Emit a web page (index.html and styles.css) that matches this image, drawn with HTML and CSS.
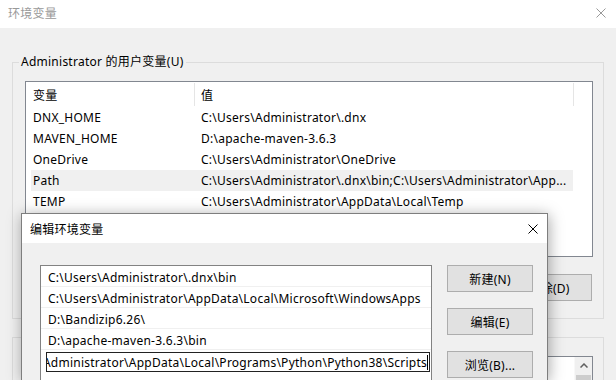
FILE: index.html
```html
<!DOCTYPE html>
<html lang="zh-CN">
<head>
  <meta charset="UTF-8" />
  <title>环境变量</title>
  <link rel="stylesheet" href="styles.css">
</head>
<body>
  <div class="window">
    <div class="titlebar inactive">
      <span class="title">环境变量</span>
      <svg class="close" width="10" height="10" viewBox="0 0 10 10"><path d="M0.5 0.5 L9.5 9.5 M9.5 0.5 L0.5 9.5" /></svg>
    </div>

    <div class="window-body">
      <fieldset class="group">
        <legend>Administrator 的用户变量(U)</legend>
        <div class="listview">
          <div class="lv-header">
            <div class="name">变量</div>
            <div class="value">值</div>
          </div>
          <div class="lv-row"><span class="name">DNX_HOME</span><span class="value">C:\Users\Administrator\.dnx</span></div>
          <div class="lv-row"><span class="name">MAVEN_HOME</span><span class="value">D:\apache-maven-3.6.3</span></div>
          <div class="lv-row"><span class="name">OneDrive</span><span class="value">C:\Users\Administrator\OneDrive</span></div>
          <div class="lv-row selected"><span class="name">Path</span><span class="value">C:\Users\Administrator\.dnx\bin;C:\Users\Administrator\App...</span></div>
          <div class="lv-row"><span class="name">TEMP</span><span class="value">C:\Users\Administrator\AppData\Local\Temp</span></div>
        </div>
        <div class="button-row">
          <button>删除(D)</button>
        </div>
      </fieldset>

      <div class="group plain">
        <div class="listview system">
          <div class="scrollbar">
            <div class="arrow"><svg width="8" height="5" viewBox="0 0 8 5"><path d="M0.5 4.5 L4 1 L7.5 4.5" /></svg></div>
            <div class="thumb"></div>
          </div>
        </div>
      </div>
    </div>
  </div>

  <!-- the edit dialog sits over the main window -->
  <div class="dialog">
    <div class="titlebar">
      <span class="title">编辑环境变量</span>
      <svg class="close" width="10" height="10" viewBox="0 0 10 10"><path d="M0.5 0.5 L9.5 9.5 M9.5 0.5 L0.5 9.5" /></svg>
    </div>
    <div class="dialog-body">
      <div class="path-list">
        <div class="path-row">C:\Users\Administrator\.dnx\bin</div>
        <div class="path-row">C:\Users\Administrator\AppData\Local\Microsoft\WindowsApps</div>
        <div class="path-row">D:\Bandizip6.26\</div>
        <div class="path-row">D:\apache-maven-3.6.3\bin</div>
        <div class="path-row editing">
          <div class="edit-box"><span class="edit-text">C:\Users\Administrator\AppData\Local\Programs\Python\Python38\Scripts</span><span class="caret"></span></div>
        </div>
      </div>
      <div class="dialog-buttons">
        <button>新建(N)</button>
        <button>编辑(E)</button>
        <button>浏览(B)...</button>
      </div>
    </div>
  </div>
</body>
</html>
```

FILE: styles.css
```css
* {
  box-sizing: border-box;
}

body {
  margin: 0;
  font-family: "Noto Sans", "Noto Sans CJK SC", sans-serif;
  font-size: 12px;
  letter-spacing: 0.25px;
  color: #000;
  background: #f0f0f0;
  overflow: hidden;
}

button {
  font: inherit;
  letter-spacing: inherit;
  color: #000;
  height: 27px;
  width: 86px;
  padding: 0;
  background: #e1e1e1;
  border: 1px solid #adadad;
}

/* main window */
.window {
  position: relative;
  width: 616px;
  height: 380px;
  background: #f0f0f0;
  overflow: hidden;
}

.titlebar {
  height: 28px;
  background: #fff;
  display: flex;
  align-items: center;
  justify-content: space-between;
  padding: 0 10px 2px 8px;
}

.titlebar .close path {
  stroke: #000;
  stroke-width: 1;
  fill: none;
}

.titlebar.inactive .title {
  color: #999;
}

.titlebar.inactive .close path {
  stroke: #999;
}

.window-body {
  padding: 0 12px;
}

.group {
  margin: 26px 0 0;
  border: 1px solid #dcdcdc;
  padding: 11px 10px 17px 12px;
  min-width: 0;
}

.group.plain {
  margin-top: 18px;
  padding-top: 18px;
}

.group legend {
  padding: 0 2px;
  margin-left: -6px;
  line-height: 16px;
}

.listview {
  height: 176px;
  border: 1px solid #828790;
  background: #fff;
}

.lv-header {
  display: flex;
  height: 25px;
  margin-left: 5px;
}

.lv-header div {
  display: flex;
  align-items: center;
  margin: 1px 0;
  border-right: 1px solid #e5e5e5;
}

.lv-header .name {
  width: 164px;
  padding-left: 2px;
}

.lv-header .value {
  width: 379px;
  padding-left: 6px;
}

.lv-row {
  display: flex;
  align-items: center;
  height: 21px;
  width: 542px;
  margin-left: 5px;
  white-space: nowrap;
}

.lv-row .name {
  width: 170px;
  padding-left: 2px;
}

.lv-row.selected {
  background: #f0f0f0;
}

.button-row {
  display: flex;
  justify-content: flex-end;
  margin: 17px 1px 0 0;
}

.listview.system {
  height: 40px;
  display: flex;
  justify-content: flex-end;
}

.scrollbar {
  width: 18px;
  background: #f0f0f0;
  border-left: 1px solid #f8f8f8;
}

.scrollbar .arrow {
  height: 17px;
  display: flex;
  align-items: center;
  justify-content: center;
}

.scrollbar .arrow path {
  fill: none;
  stroke: #606060;
  stroke-width: 1.5;
}

.scrollbar .thumb {
  margin: 1px 1px 0;
  height: 20px;
  background: #cdcdcd;
}

/* edit dialog */
.dialog {
  position: absolute;
  left: 21px;
  top: 213px;
  width: 527px;
  height: 167px;
  overflow: hidden;
  background: #f0f0f0;
  border: 1px solid #7e7e7e;
  border-bottom: none;
  box-shadow: 1px 2px 14px rgba(0, 0, 0, 0.35);
}

.dialog .titlebar {
  height: 29px;
  padding: 0 9px 0 8px;
}

.dialog-body {
  display: flex;
  gap: 15px;
  padding: 22px 14px 0 18px;
}

.path-list {
  width: 392px;
  height: 130px;
  border: 1px solid #828282;
  border-bottom: none;
  background: #fff;
}

.path-row {
  height: 21px;
  padding: 3px 0 0 7px;
  display: flex;
  align-items: center;
  border-bottom: 1px solid #f0f0f0;
  white-space: nowrap;
}

.path-row.editing {
  display: block;
  padding: 2px 1px 0 5px;
  border-bottom: none;
}

.edit-box {
  width: 384px;
  height: 20px;
  border: 1px solid #222;
  display: flex;
  align-items: center;
  justify-content: flex-end;
  overflow: hidden;
  white-space: nowrap;
  padding-right: 1px;
}

.edit-text {
  flex-shrink: 0;
}

.caret {
  flex-shrink: 0;
  width: 1px;
  height: 15px;
  background: #000;
}

.dialog-buttons {
  display: flex;
  flex-direction: column;
  gap: 16px;
}
```
